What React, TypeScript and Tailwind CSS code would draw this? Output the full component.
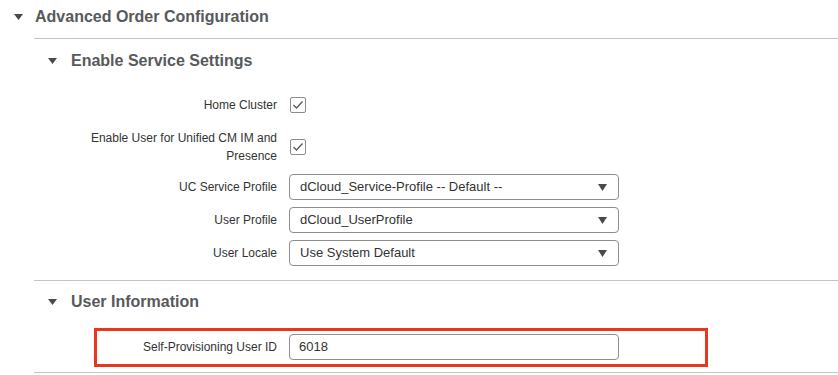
import React from "react";

const Tri = ({ className = "" }: { className?: string }) => (
  <svg width="9" height="6" viewBox="0 0 9 6" className={className}>
    <path d="M0 0 L9 0 L4.5 6 Z" fill="#4a4a4a" />
  </svg>
);

const Check = () => (
  <div className="w-[16px] h-[16px] border border-[#8c8c8c] rounded-[2px] bg-white flex items-center justify-center">
    <svg width="12" height="10" viewBox="0 0 12 10">
      <path d="M1.5 5 L4.5 8 L10.5 1.5" stroke="#5a5a5a" strokeWidth="1.3" fill="none" />
    </svg>
  </div>
);

const Select = ({ value }: { value: string }) => (
  <div className="w-[330px] h-[26px] border border-[#8e8e8e] rounded-[4px] bg-white flex items-center justify-between pl-[10px] pr-[11px] text-[13px] text-[#333]">
    <span>{value}</span>
    <svg width="9" height="7" viewBox="0 0 9 7">
      <path d="M0 0 L9 0 L4.5 7 Z" fill="#4a4a4a" />
    </svg>
  </div>
);

const Label = ({ children, w = "w-[255px]" }: { children: React.ReactNode; w?: string }) => (
  <div className={`${w} text-right text-[12px] leading-[18px] text-[#333] pr-[12px] shrink-0`}>{children}</div>
);

export default function App() {
  return (
    <div
      className="w-[838px] h-[375px] bg-white overflow-hidden"
      style={{ fontFamily: '"Liberation Sans", Arial, sans-serif' }}
    >
      <div className="h-[38px] pb-[4px] pl-[14px] flex items-center">
        <Tri />
        <span className="ml-[12px] text-[16px] font-bold text-[#58595b]">Advanced Order Configuration</span>
      </div>
      <div className="ml-[34px]">
        <div className="border-t border-[#c4c4c4]">
          <div className="h-[43px] pl-[14px] flex items-center">
            <Tri />
            <span className="ml-[14px] text-[16px] font-bold text-[#58595b]">Enable Service Settings</span>
          </div>
          <div className="mt-[14px] flex items-center">
            <Label>Home Cluster</Label>
            <div className="ml-px">
              <Check />
            </div>
          </div>
          <div className="mt-[15px] flex items-center">
            <Label>
              Enable User for Unified CM IM and
              <br />
              Presence
            </Label>
            <div className="ml-px">
              <Check />
            </div>
          </div>
          <div className="mt-[9px] flex items-center">
            <Label>UC Service Profile</Label>
            <Select value="dCloud_Service-Profile -- Default --" />
          </div>
          <div className="mt-[7px] flex items-center">
            <Label>User Profile</Label>
            <Select value="dCloud_UserProfile" />
          </div>
          <div className="mt-[7px] flex items-center">
            <Label>User Locale</Label>
            <Select value="Use System Default" />
          </div>
          <div className="h-[14px]" />
        </div>
        <div className="border-t border-[#c4c4c4]">
          <div className="h-[42px] pl-[14px] flex items-center">
            <Tri />
            <span className="ml-[14px] text-[16px] font-bold text-[#58595b]">User Information</span>
          </div>
          <div className="mt-[5px] ml-[60px] w-[614px] border-[3px] border-[#e8361f] pt-[3px] pb-[4px] flex items-center">
            <Label w="w-[192px]">Self-Provisioning User ID</Label>
            <div className="w-[330px] h-[26px] border border-[#8e8e8e] rounded-[4px] bg-white flex items-center pl-[9px] text-[13px] text-[#333]">
              6018
            </div>
          </div>
          <div className="mt-[5px] border-t border-[#c4c4c4]" />
        </div>
      </div>
    </div>
  );
}
